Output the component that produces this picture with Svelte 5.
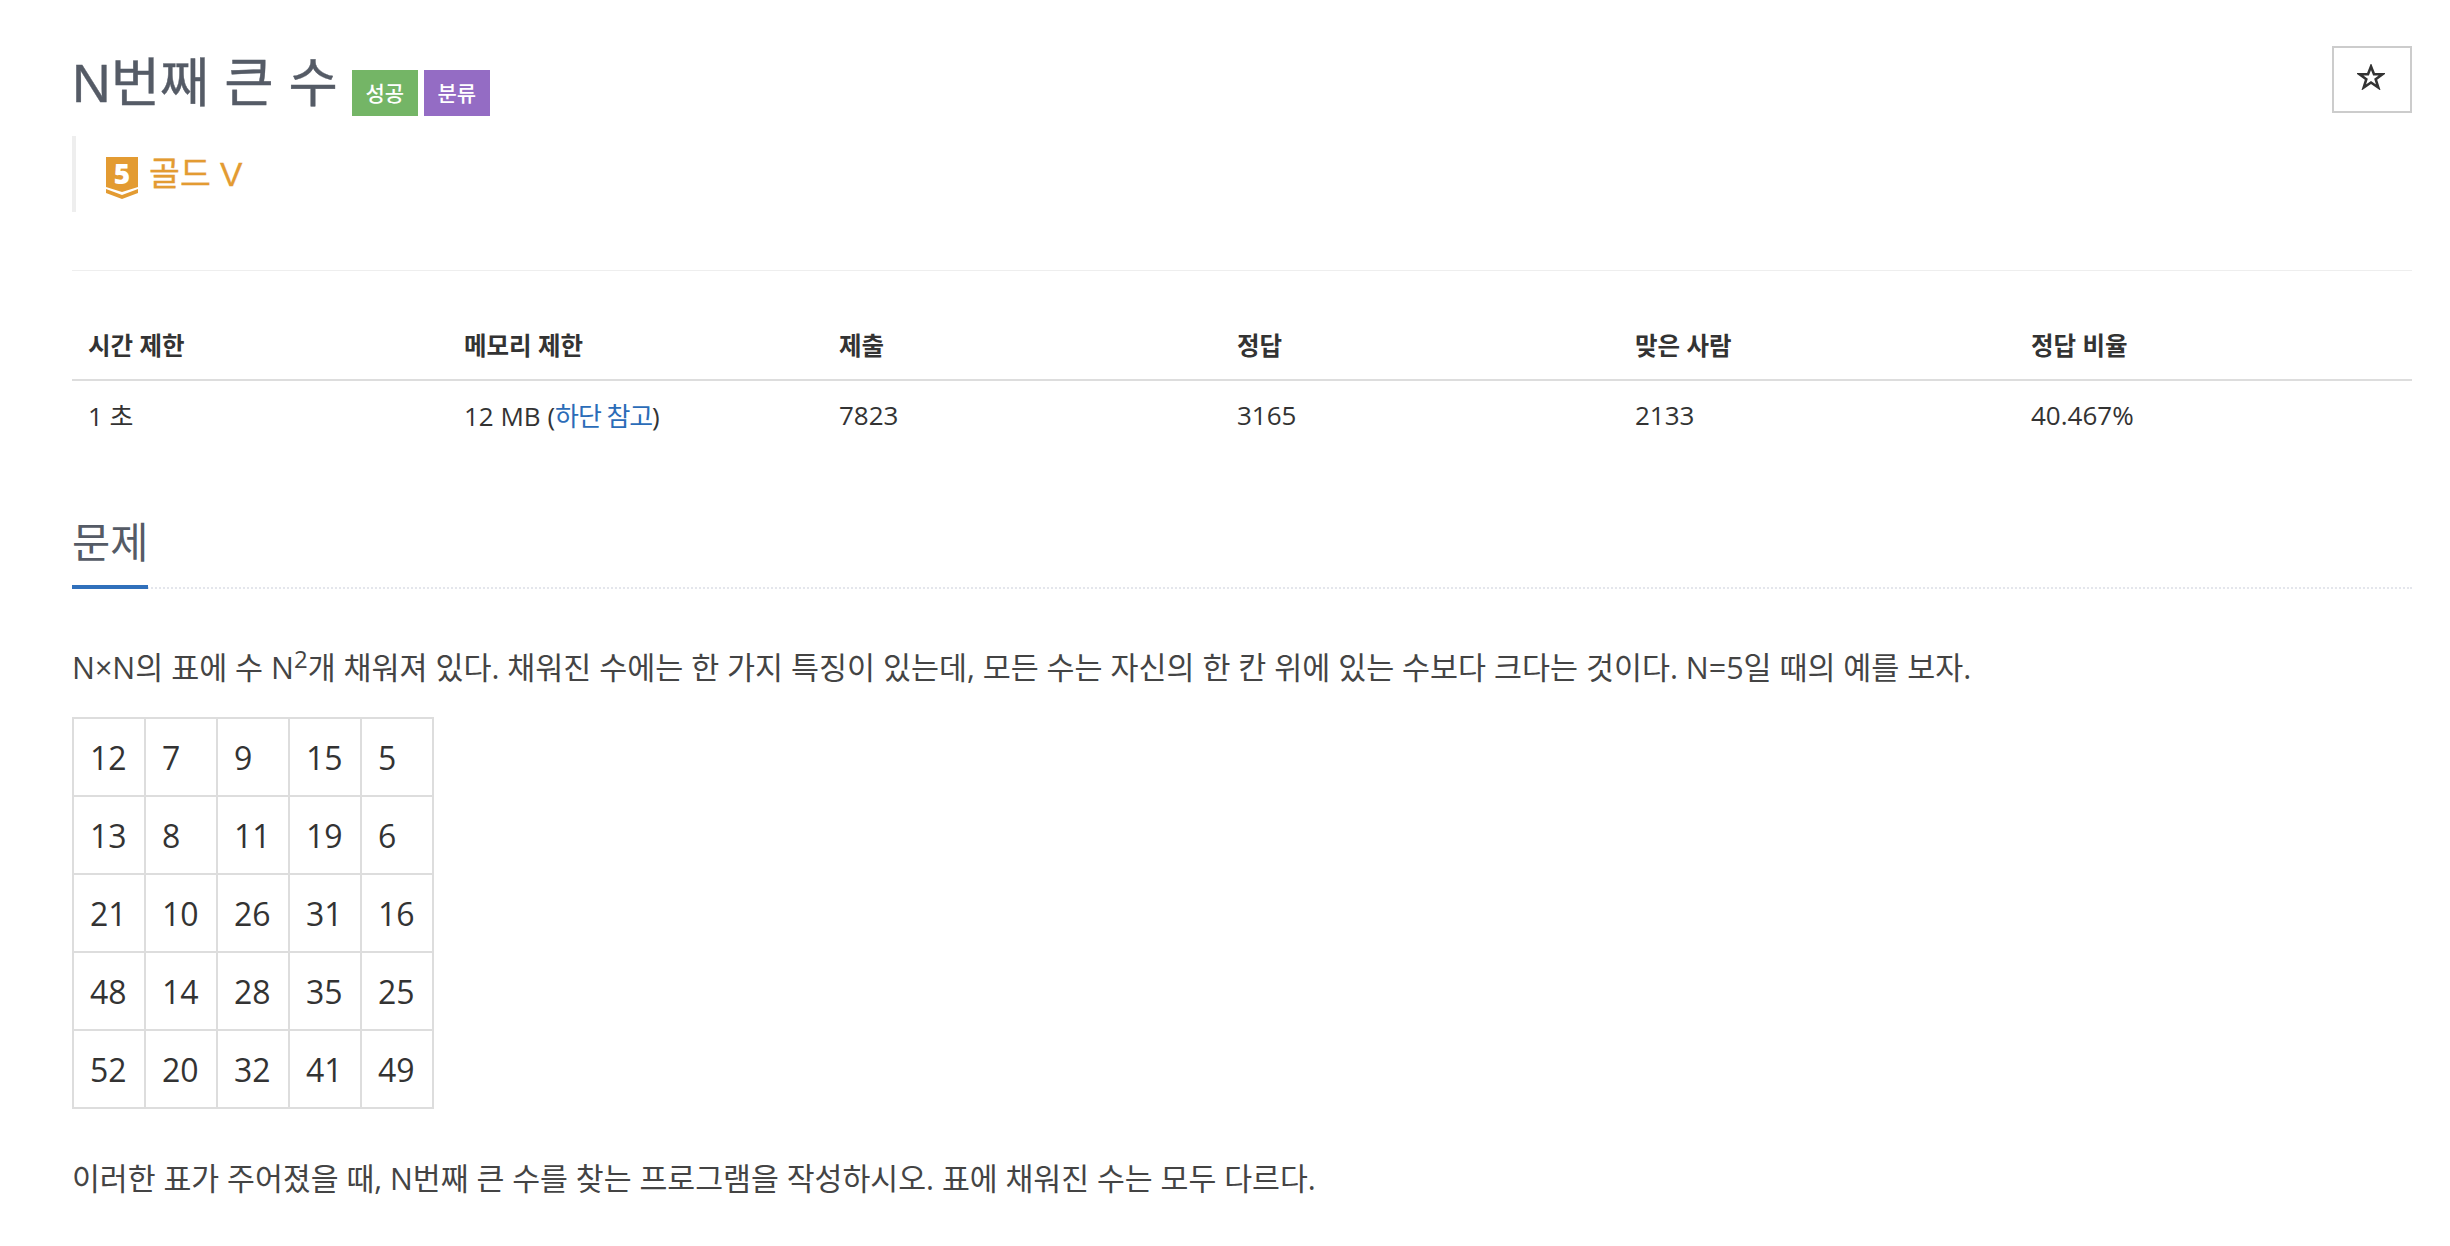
<script>
  const stats = [
    { h: '시간 제한', v: '1 초' },
    { h: '메모리 제한', v: null },
    { h: '제출', v: '7823' },
    { h: '정답', v: '3165' },
    { h: '맞은 사람', v: '2133' },
    { h: '정답 비율', v: '40.467%' }
  ];
  const grid = [
    [12, 7, 9, 15, 5],
    [13, 8, 11, 19, 6],
    [21, 10, 26, 31, 16],
    [48, 14, 28, 35, 25],
    [52, 20, 32, 41, 49]
  ];
</script>

<div class="page">
  <div class="head">
    <div class="title-wrap">
      <h1>N번째 큰 수</h1>
      <span class="badge green">성공</span>
      <span class="badge purple">분류</span>
    </div>
    <button class="star" aria-label="즐겨찾기">
      <svg width="28" height="26" viewBox="0 0 28 26">
        <path d="M14 2.5 L17 10.2 L25.5 10.2 L18.7 15.3 L21.3 23.5 L14 18.5 L6.7 23.5 L9.3 15.3 L2.5 10.2 L11 10.2 Z" fill="none" stroke="#333" stroke-width="2.6" stroke-linejoin="miter"/>
      </svg>
    </button>
  </div>

  <div class="tier">
    <div class="medal">
      <svg width="32" height="42" viewBox="0 0 32 42">
        <path d="M0 0H32V30L16 35L0 30Z" fill="#e39b32"/>
        <path d="M0 32L16 38L32 32V36L16 42L0 36Z" fill="#e39b32"/>
      </svg>
      <span class="medal-num">5</span>
    </div>
    <span class="tier-text">골드 V</span>
  </div>

  <hr />

  <table class="stats">
    <thead>
      <tr>
        {#each stats as s}<th>{s.h}</th>{/each}
      </tr>
    </thead>
    <tbody>
      <tr>
        {#each stats as s}
          <td>{#if s.v}{s.v}{:else}12 MB (<a href="#note">하단 참고</a>){/if}</td>
        {/each}
      </tr>
    </tbody>
  </table>

  <div class="section">
    <h2><span>문제</span></h2>
  </div>

  <p class="first">N×N의 표에 수 N<sup>2</sup>개 채워져 있다. 채워진 수에는 한 가지 특징이 있는데, 모든 수는 자신의 한 칸 위에 있는 수보다 크다는 것이다. N=5일 때의 예를 보자.</p>

  <table class="nums">
    <tbody>
      {#each grid as row}
        <tr>
          {#each row as n}<td>{n}</td>{/each}
        </tr>
      {/each}
    </tbody>
  </table>

  <p class="last">이러한 표가 주어졌을 때, N번째 큰 수를 찾는 프로그램을 작성하시오. 표에 채워진 수는 모두 다르다.</p>
</div>

<style>
  :global(body) {
    margin: 0;
    background: #fff;
  }
  .page {
    box-sizing: border-box;
    width: 2450px;
    height: 1246px;
    overflow: hidden;
    padding: 46px 38px 0 72px;
    font-family: "Open Sans", "Noto Sans CJK KR", sans-serif;
    color: #333;
  }
  .head {
    display: flex;
    justify-content: space-between;
    align-items: flex-start;
    height: 90px;
  }
  .title-wrap {
    display: flex;
    align-items: flex-start;
  }
  h1 {
    margin: 2px 0 0;
    font-family: "Liberation Sans", "Noto Sans CJK KR", sans-serif;
    font-weight: 400;
    font-size: 53.6px;
    line-height: 70px;
    color: #555b66;
    -webkit-text-stroke: 0.4px #555b66;
  }
  .badge {
    box-sizing: border-box;
    width: 66px;
    height: 46px;
    margin-top: 24px;
    color: #fff;
    font-size: 21px;
    font-weight: 500;
    line-height: 46px;
    text-align: center;
  }
  .green {
    background: #74b566;
    margin-left: 14px;
  }
  .purple {
    background: #946cc4;
    margin-left: 6px;
  }
  .star {
    box-sizing: border-box;
    width: 80px;
    height: 67px;
    padding: 0;
    background: #fff;
    border: 2px solid #ccc;
    display: flex;
    align-items: center;
    justify-content: center;
  }
  .star svg {
    margin: 0 2px 5px 0;
  }
  .tier {
    box-sizing: border-box;
    height: 76px;
    border-left: 4px solid #eee;
    padding-left: 30px;
    display: flex;
    align-items: center;
    gap: 11px;
  }
  .medal {
    position: relative;
    width: 32px;
    height: 42px;
    margin-top: 8px;
  }
  .medal svg {
    display: block;
  }
  .medal-num {
    position: absolute;
    left: 0;
    top: 0;
    width: 32px;
    text-align: center;
    font-weight: 800;
    font-size: 28px;
    line-height: 32px;
    color: #fff;
  }
  .tier-text {
    font-family: "Liberation Sans", "Noto Sans CJK KR", sans-serif;
    font-size: 33.6px;
    line-height: 48px;
    margin-top: 2px;
    color: #e39b32;
    -webkit-text-stroke: 0.3px #e39b32;
  }
  hr {
    border: 0;
    border-top: 1px solid #eee;
    margin: 58px 0 0;
  }
  .stats {
    width: 100%;
    table-layout: fixed;
    border-collapse: collapse;
    margin-top: 38px;
    font-size: 26px;
  }
  .stats th {
    text-align: left;
    font-weight: 700;
    font-size: 24.5px;
    padding: 0 16px;
    height: 70px;
    border-bottom: 2px solid #ddd;
  }
  .stats td {
    box-sizing: border-box;
    padding: 0 16px 2px;
    height: 70px;
  }
  .stats th:nth-child(1) { width: 376px; box-sizing: border-box; }
  .stats th:nth-child(2) { width: 375px; box-sizing: border-box; }
  .stats th:nth-child(3) { width: 398px; box-sizing: border-box; }
  .stats th:nth-child(4) { width: 398px; box-sizing: border-box; }
  .stats th:nth-child(5) { width: 396px; box-sizing: border-box; }
  a {
    color: #2b6cb8;
    text-decoration: none;
    letter-spacing: -1.1px;
  }
  .section {
    margin-top: 59px;
    border-bottom: 2px dotted #e4e6ec;
    height: 78px;
  }
  h2 {
    margin: 0;
    font-weight: 400;
    font-size: 41.5px;
    line-height: 66px;
    color: #555b66;
  }
  h2 span {
    display: inline-block;
    height: 80px;
    border-bottom: 4px solid #3070bb;
    box-sizing: border-box;
  }
  p {
    margin: 0;
    font-size: 30.4px;
    line-height: 44px;
    color: #444;
  }
  .first {
    margin-top: 56px;
    font-size: 30.45px;
  }
  sup {
    font-size: 24px;
    line-height: 0;
  }
  .nums {
    border-collapse: collapse;
    margin-top: 28px;
    border: 2px solid #ddd;
    font-size: 32px;
  }
  .nums td {
    box-sizing: border-box;
    width: 72px;
    height: 78px;
    padding: 0 0 0 16px;
    border: 2px solid #ddd;
    text-align: left;
    color: #333;
  }
  .last {
    margin-top: 48px;
    font-size: 30.3px;
  }
</style>
